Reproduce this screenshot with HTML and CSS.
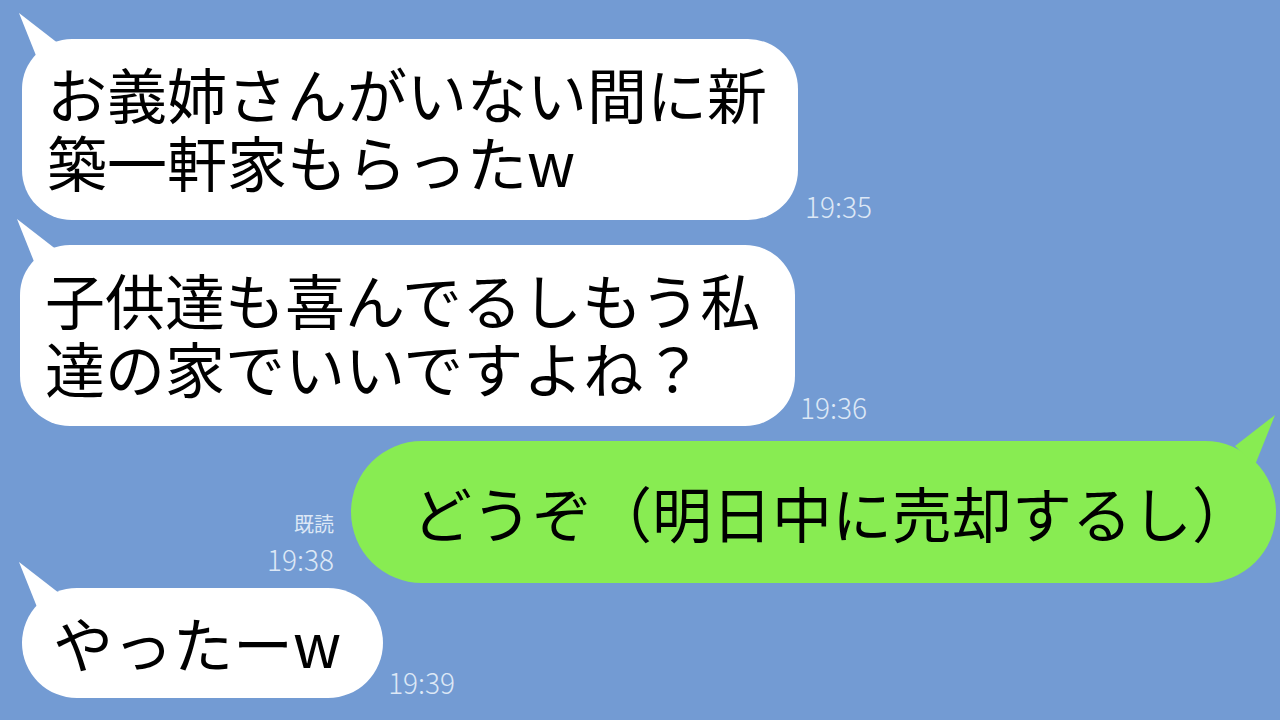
FILE: index.html
```html
<!DOCTYPE html>
<html lang="ja">
<head>
  <meta charset="UTF-8" />
  <meta name="viewport" content="width=device-width, initial-scale=1.0" />
  <title>トーク</title>
  <link rel="stylesheet" href="styles.css">
</head>
<body>
  <main class="chat">
    <div class="row row-in r1">
      <div class="bubble in b1">
        <svg class="tail" viewBox="0 0 46 56"><polygon points="2,2 42,33 22,52" /></svg>
        <p>お義姉さんがいない間に新<br>築一軒家もらったw</p>
      </div>
      <span class="time t1">19:35</span>
    </div>

    <div class="row row-in r2">
      <div class="bubble in b2">
        <svg class="tail" viewBox="0 0 46 56"><polygon points="2,2 42,33 22,52" /></svg>
        <p>子供達も喜んでるしもう私<br>達の家でいいですよね？</p>
      </div>
      <span class="time t2">19:36</span>
    </div>

    <div class="row row-out r3">
      <div class="meta">
        <span class="read">既読</span>
        <span class="time">19:38</span>
      </div>
      <div class="bubble out b3">
        <svg class="tail" viewBox="0 0 46 56"><polygon points="2,2 42,33 22,52" /></svg>
        <p>どうぞ（明日中に売却するし）</p>
      </div>
    </div>

    <div class="row row-in r4">
      <div class="bubble in b4">
        <svg class="tail" viewBox="0 0 46 56"><polygon points="2,2 42,33 22,52" /></svg>
        <p>やったーw</p>
      </div>
      <span class="time t4">19:39</span>
    </div>
  </main>
</body>
</html>
```

FILE: styles.css
```css
body {
  margin: 0;
  height: 720px;
  overflow: hidden;
  background-color: #739bd3;
  font-family: "Noto Sans CJK JP", "Noto Sans", sans-serif;
  color: #000;
}
.chat {
  display: flex;
  flex-direction: column;
  padding-top: 39px;
}
.row {
  display: flex;
  align-items: flex-end;
}
.row-out {
  justify-content: flex-end;
  padding-right: 4px;
}
.bubble {
  position: relative;
  background: #fff;
  color: #fff;
}
.bubble p {
  margin: 0;
  color: #000;
  font-size: 60px;
  line-height: 68px;
  white-space: nowrap;
}
.tail {
  position: absolute;
  left: -5px;
  top: -28px;
  width: 46px;
  height: 56px;
}
.tail polygon {
  fill: currentColor;
}
.out {
  background: #88ec52;
  color: #88ec52;
}
.out .tail {
  left: auto;
  right: -1px;
  transform: scaleX(-1);
}
.b1, .b2 {
  border-radius: 50px;
  padding: 20px 30px 25px 25px;
}
.b1 {
  margin-left: 22px;
  width: 721px;
}
.b2 {
  margin-left: 20px;
  width: 720px;
}
.r2 {
  margin-top: 25px;
}
.r3 {
  margin-top: 15px;
}
.r4 {
  margin-top: 5px;
}
.b3 {
  border-radius: 71px;
  padding: 37px 24px 37px 61px;
}
.b4 {
  margin-left: 22px;
  border-radius: 55px;
  padding: 20px 42px 22px 31px;
}
.time {
  font-size: 28px;
  line-height: 28px;
  font-weight: 300;
  color: #dde8f6;
}
.t1 {
  margin-left: 7px;
}
.t2 {
  margin-left: 5px;
  margin-bottom: 5px;
}
.t4 {
  margin-left: 5px;
  margin-bottom: 2px;
}
.meta {
  display: flex;
  flex-direction: column;
  align-items: flex-end;
  margin-right: 17px;
  margin-bottom: 10px;
}
.read {
  font-size: 20px;
  line-height: 22px;
  color: #dde8f6;
  margin-bottom: 10px;
}
```
